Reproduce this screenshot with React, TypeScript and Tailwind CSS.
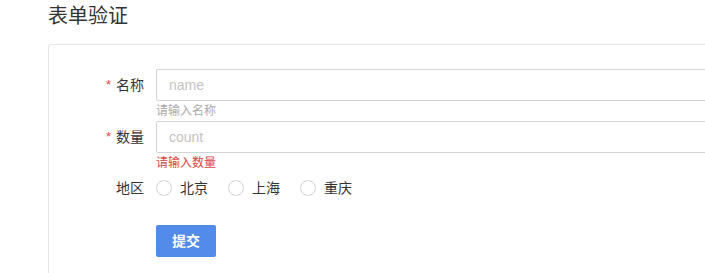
import React from 'react';

const font = '"Liberation Sans", "Noto Sans CJK SC", sans-serif';

function Label({ text, required }: { text: string; required?: boolean }) {
  return (
    <div className="w-[107px] h-8 shrink-0 flex items-center justify-end pr-3 text-[14px] text-[#333]">
      {required && <span className="text-[#e5453f] mr-[5px] text-[13px]">*</span>}
      {text}
    </div>
  );
}

function TextField({ placeholder }: { placeholder: string }) {
  return (
    <input
      placeholder={placeholder}
      className="w-full h-8 border border-[#d4d4d4] rounded-[2px] px-3 text-[14px] outline-none placeholder:text-[#c4c4c4]"
      style={{ fontFamily: font }}
    />
  );
}

function Radio({ label }: { label: string }) {
  return (
    <label className="flex items-center mr-5 text-[14px] text-[#333]">
      <span className="w-4 h-4 rounded-full border border-[#d4d4d4] bg-white mr-2" />
      {label}
    </label>
  );
}

export default function App() {
  return (
    <div className="w-[705px] h-[273px] overflow-hidden bg-white pl-12" style={{ fontFamily: font }}>
      <div className="h-[44px] pt-[2px] text-[20px] leading-[28px] text-[#333]">表单验证</div>
      <div className="w-[900px] min-h-[260px] border border-[#e6e6e6] rounded-[3px] pt-6 pr-8">
        <div className="flex">
          <Label text="名称" required />
          <div className="flex-1">
            <TextField placeholder="name" />
            <div className="h-5 leading-5 text-[12px] text-[#aaa]">请输入名称</div>
          </div>
        </div>
        <div className="flex">
          <Label text="数量" required />
          <div className="flex-1">
            <TextField placeholder="count" />
            <div className="h-5 leading-5 text-[12px] text-[#d9463f]">请输入数量</div>
          </div>
        </div>
        <div className="flex h-[30px] items-center">
          <div className="w-[107px] shrink-0 flex justify-end pr-3 text-[14px] text-[#333]">地区</div>
          <Radio label="北京" />
          <Radio label="上海" />
          <Radio label="重庆" />
        </div>
        <div className="pl-[107px] mt-[22px]">
          <button className="w-[60px] h-8 rounded-[2px] bg-[#528bea] text-white text-[14px] font-bold">提交</button>
        </div>
      </div>
    </div>
  );
}
